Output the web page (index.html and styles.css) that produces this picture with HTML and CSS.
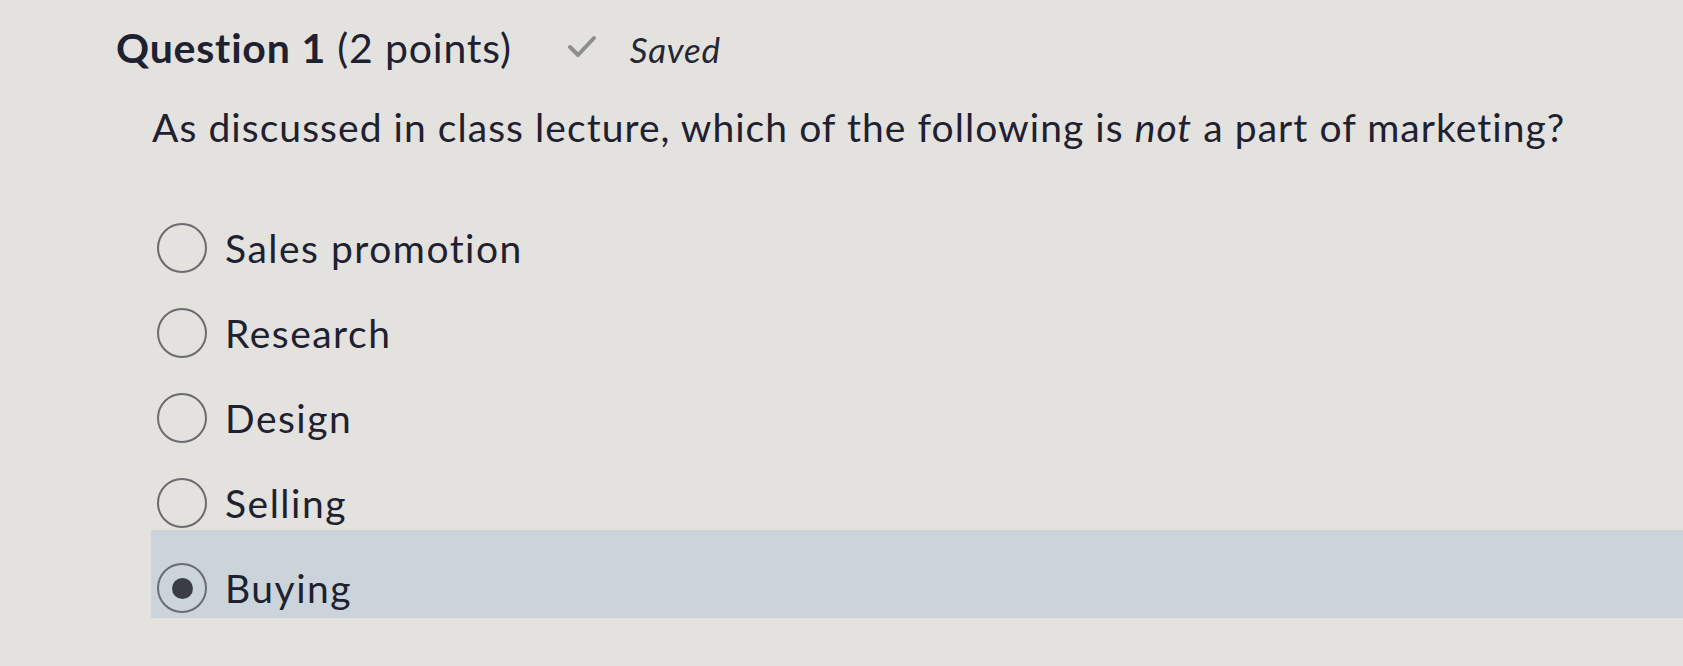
FILE: index.html
```html
<!DOCTYPE html>
<html lang="en">
<head>
<meta charset="utf-8">
<title>Question 1</title>
<link rel="stylesheet" href="styles.css">
</head>
<body>
<main class="quiz">
  <header class="q-head">
    <h1 class="q-title"><strong>Question 1</strong> <span class="q-points">(2 points)</span></h1>
    <span class="q-status">
      <svg class="q-check" viewBox="0 0 30 24" width="30" height="24" aria-hidden="true"><path d="M3 13 L11 21 L27 4" fill="none" stroke="#8d8d8d" stroke-width="4" stroke-linecap="round" stroke-linejoin="round"/></svg>
      <em class="q-saved">Saved</em>
    </span>
  </header>
  <p class="q-text">As discussed in class lecture, which of the following is <em>not</em> a part of marketing?</p>
  <ul class="options">
    <li class="option"><span class="radio"></span><span class="label">Sales promotion</span></li>
    <li class="option"><span class="radio"></span><span class="label">Research</span></li>
    <li class="option"><span class="radio"></span><span class="label">Design</span></li>
    <li class="option"><span class="radio"></span><span class="label">Selling</span></li>
    <li class="option option-selected"><span class="radio radio-on"></span><span class="label">Buying</span></li>
  </ul>
</main>
</body>
</html>
```
FILE: styles.css
```css
html, body {
  margin: 0;
  padding: 0;
}
body {
  background: #e3e2de;
  color: #1f2030;
  font-family: Lato, "Open Sans", sans-serif;
  font-variant-ligatures: none;
  width: 1683px;
  height: 666px;
  overflow: hidden;
}
.quiz {
  padding-top: 24px;
}
.q-head {
  display: flex;
  align-items: baseline;
  padding-left: 116px;
  height: 48px;
}
.q-title {
  margin: 0;
  font-size: 41px;
  line-height: 48px;
  font-weight: 400;
  letter-spacing: 0.8px;
}
.q-title strong {
  font-weight: 700;
}
.q-status {
  display: flex;
  align-items: baseline;
  margin-left: 55px;
}
.q-check {
  align-self: center;
  position: relative;
  top: -3px;
}
.q-saved {
  margin-left: 33px;
  font-size: 35px;
  font-style: italic;
  letter-spacing: 0.8px;
  color: #262734;
}
.q-text {
  margin: 32px 0 0 152px;
  font-size: 39px;
  line-height: 46px;
  letter-spacing: 1.05px;
}
.options {
  list-style: none;
  margin: 55px 0 0 151px;
  padding: 0;
}
.option {
  display: flex;
  align-items: center;
  height: 85px;
  padding-left: 6px;
  box-sizing: border-box;
}
.option-selected {
  margin-top: -15px;
  height: 88px;
  align-items: flex-end;
  padding-bottom: 5px;
  background: #cbd4da;
}
.radio {
  width: 50px;
  height: 50px;
  box-sizing: border-box;
  border: 2.5px solid #6b6b70;
  border-radius: 50%;
  flex: none;
  display: flex;
  align-items: center;
  justify-content: center;
}
.radio-on::after {
  content: "";
  width: 21px;
  height: 21px;
  border-radius: 50%;
  background: #3a3e44;
}
.label {
  margin-left: 18px;
  font-size: 39px;
  line-height: 46px;
  letter-spacing: 1.5px;
}
.option-selected .label {
  position: relative;
  top: -2px;
}
```
